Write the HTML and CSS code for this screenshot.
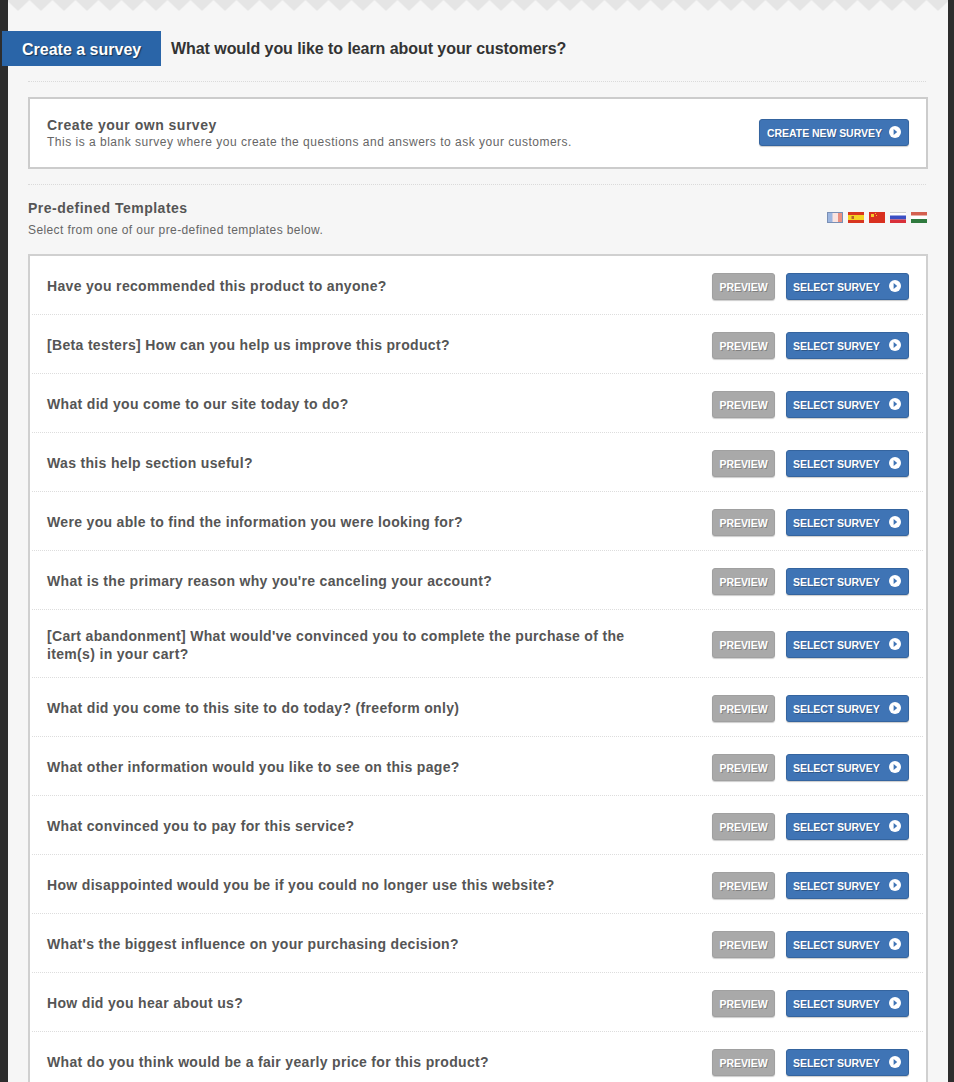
FILE: index.html
```html
<!DOCTYPE html>
<html lang="en">
<head>
    <meta charset="UTF-8">
    <meta name="viewport" content="width=device-width, initial-scale=1.0">
    <title>Create a survey</title>
    <link rel="stylesheet" href="styles.css">
</head>
<body>
    <svg width="0" height="0" class="defs">
        <symbol id="arrow" viewBox="0 0 12 12">
            <circle cx="6" cy="6" r="6" fill="#fff"/>
            <path d="M4.6 3l3.6 3-3.6 3z" fill="#3f74b5"/>
        </symbol>
    </svg>

    <div class="panel">
        <svg class="zigzag" width="100%" height="11">
            <defs>
                <pattern id="teeth" width="23" height="11" patternUnits="userSpaceOnUse" patternTransform="translate(-1.5 0)">
                    <path d="M0 0h23L11.5 11z" fill="#e5e5e5"/>
                </pattern>
            </defs>
            <rect width="100%" height="11" fill="url(#teeth)"/>
        </svg>

        <div class="page-head">
            <h1 class="tab">Create a survey</h1>
            <h2 class="question">What would you like to learn about your customers?</h2>
        </div>

        <div class="content">
            <div class="divider"></div>

            <div class="own-box">
                <div>
                    <h3>Create your own survey</h3>
                    <p>This is a blank survey where you create the questions and answers to ask your customers.</p>
                </div>
                <a class="btn btn-blue btn-create" href="#">CREATE NEW SURVEY <svg class="arrow"><use href="#arrow"/></svg></a>
            </div>

            <div class="divider"></div>

            <div class="templates-head">
                <div class="templates-text">
                    <h3>Pre-defined Templates</h3>
                    <p>Select from one of our pre-defined templates below.</p>
                </div>
                <div class="flags">
                    <svg class="flag" viewBox="0 0 16 11"><rect width="16" height="11" fill="#fbe4e0"/><rect width="5.5" height="11" fill="#9db6e0"/><rect x="11" width="5" height="11" fill="#ea8f80"/><rect x=".5" y=".5" width="15" height="10" fill="none" stroke="#7a8fb5"/></svg>
                    <svg class="flag" viewBox="0 0 16 11"><rect width="16" height="11" fill="#d8361f"/><rect y="3" width="16" height="5" fill="#f5d323"/><rect x="3.5" y="4" width="2.5" height="3" fill="#b8612a"/></svg>
                    <svg class="flag" viewBox="0 0 16 11"><rect width="16" height="11" fill="#d9301f"/><rect x="2" y="2" width="3" height="3" fill="#f6c92a"/><rect x="6" y="1" width="1" height="1" fill="#f6c92a"/><rect x="7" y="3" width="1" height="1" fill="#f6c92a"/></svg>
                    <svg class="flag" viewBox="0 0 16 11"><rect width="16" height="11" fill="#fff"/><rect y="3.5" width="16" height="4" fill="#3b4fc4"/><rect y="7.5" width="16" height="3.5" fill="#d9303a"/><rect width="16" height=".5" fill="#999"/></svg>
                    <svg class="flag" viewBox="0 0 16 11"><rect width="16" height="11" fill="#fff"/><rect width="16" height="3.5" fill="#d4604f"/><rect y="7" width="16" height="4" fill="#2f7a3e"/></svg>
                </div>
            </div>

            <div class="template-list">
                <div class="row"><span class="row-title">Have you recommended this product to anyone?</span><div class="row-actions"><a class="btn btn-grey" href="#">PREVIEW</a><a class="btn btn-blue" href="#">SELECT SURVEY <svg class="arrow"><use href="#arrow"/></svg></a></div></div>
                <div class="row"><span class="row-title">[Beta testers] How can you help us improve this product?</span><div class="row-actions"><a class="btn btn-grey" href="#">PREVIEW</a><a class="btn btn-blue" href="#">SELECT SURVEY <svg class="arrow"><use href="#arrow"/></svg></a></div></div>
                <div class="row"><span class="row-title">What did you come to our site today to do?</span><div class="row-actions"><a class="btn btn-grey" href="#">PREVIEW</a><a class="btn btn-blue" href="#">SELECT SURVEY <svg class="arrow"><use href="#arrow"/></svg></a></div></div>
                <div class="row"><span class="row-title">Was this help section useful?</span><div class="row-actions"><a class="btn btn-grey" href="#">PREVIEW</a><a class="btn btn-blue" href="#">SELECT SURVEY <svg class="arrow"><use href="#arrow"/></svg></a></div></div>
                <div class="row"><span class="row-title">Were you able to find the information you were looking for?</span><div class="row-actions"><a class="btn btn-grey" href="#">PREVIEW</a><a class="btn btn-blue" href="#">SELECT SURVEY <svg class="arrow"><use href="#arrow"/></svg></a></div></div>
                <div class="row"><span class="row-title">What is the primary reason why you're canceling your account?</span><div class="row-actions"><a class="btn btn-grey" href="#">PREVIEW</a><a class="btn btn-blue" href="#">SELECT SURVEY <svg class="arrow"><use href="#arrow"/></svg></a></div></div>
                <div class="row row-tall"><span class="row-title">[Cart abandonment] What would've convinced you to complete the purchase of the item(s) in your cart?</span><div class="row-actions"><a class="btn btn-grey" href="#">PREVIEW</a><a class="btn btn-blue" href="#">SELECT SURVEY <svg class="arrow"><use href="#arrow"/></svg></a></div></div>
                <div class="row"><span class="row-title">What did you come to this site to do today? (freeform only)</span><div class="row-actions"><a class="btn btn-grey" href="#">PREVIEW</a><a class="btn btn-blue" href="#">SELECT SURVEY <svg class="arrow"><use href="#arrow"/></svg></a></div></div>
                <div class="row"><span class="row-title">What other information would you like to see on this page?</span><div class="row-actions"><a class="btn btn-grey" href="#">PREVIEW</a><a class="btn btn-blue" href="#">SELECT SURVEY <svg class="arrow"><use href="#arrow"/></svg></a></div></div>
                <div class="row"><span class="row-title">What convinced you to pay for this service?</span><div class="row-actions"><a class="btn btn-grey" href="#">PREVIEW</a><a class="btn btn-blue" href="#">SELECT SURVEY <svg class="arrow"><use href="#arrow"/></svg></a></div></div>
                <div class="row"><span class="row-title">How disappointed would you be if you could no longer use this website?</span><div class="row-actions"><a class="btn btn-grey" href="#">PREVIEW</a><a class="btn btn-blue" href="#">SELECT SURVEY <svg class="arrow"><use href="#arrow"/></svg></a></div></div>
                <div class="row"><span class="row-title">What's the biggest influence on your purchasing decision?</span><div class="row-actions"><a class="btn btn-grey" href="#">PREVIEW</a><a class="btn btn-blue" href="#">SELECT SURVEY <svg class="arrow"><use href="#arrow"/></svg></a></div></div>
                <div class="row"><span class="row-title">How did you hear about us?</span><div class="row-actions"><a class="btn btn-grey" href="#">PREVIEW</a><a class="btn btn-blue" href="#">SELECT SURVEY <svg class="arrow"><use href="#arrow"/></svg></a></div></div>
                <div class="row"><span class="row-title">What do you think would be a fair yearly price for this product?</span><div class="row-actions"><a class="btn btn-grey" href="#">PREVIEW</a><a class="btn btn-blue" href="#">SELECT SURVEY <svg class="arrow"><use href="#arrow"/></svg></a></div></div>
            </div>
        </div>
    </div>
</body>
</html>
```

FILE: styles.css
```css
* {
    margin: 0;
    padding: 0;
    box-sizing: border-box;
}

html, body {
    height: 1082px;
    overflow: hidden;
}

body {
    font-family: "Liberation Sans", Arial, sans-serif;
    background-color: #2d2d2d;
    color: #555;
}

.defs {
    position: absolute;
}

.panel {
    width: 940px;
    margin-left: 8px;
    height: 1082px;
    background-color: #f6f6f6;
}

.zigzag {
    display: block;
}

.page-head {
    display: flex;
    align-items: center;
    margin: 20px 0 0 -6px;
}

.tab {
    width: 159px;
    height: 35px;
    padding-left: 20px;
    background-color: #2a65a8;
    color: #fff;
    font-size: 16px;
    line-height: 37px;
    font-weight: bold;
    text-shadow: 1px 1px 1px rgba(0, 0, 0, 0.5);
}

.question {
    margin-left: 10px;
    font-size: 16px;
    font-weight: bold;
    letter-spacing: -0.06px;
    color: #333;
}

.content {
    margin: 15px 20px 0;
    width: 900px;
}

.divider {
    height: 1px;
    margin-right: 2px;
    border-top: 1px dotted #dadada;
}

h3 {
    font-size: 14px;
    line-height: 16px;
    font-weight: bold;
    letter-spacing: 0.5px;
    color: #555;
}

.own-box p,
.templates-head p {
    font-size: 12px;
    color: #666;
}

.own-box {
    display: flex;
    align-items: center;
    justify-content: space-between;
    height: 72px;
    margin: 15px 0;
    padding: 0 17px;
    background-color: #fff;
    border: 2px solid #ccc;
}

.own-box p {
    margin-top: 2px;
    line-height: 14px;
    letter-spacing: 0.5px;
}

.templates-head {
    display: flex;
    align-items: center;
    justify-content: space-between;
    height: 69px;
}

.templates-text {
    margin-bottom: 2px;
}

.templates-head p {
    margin-top: 7px;
    letter-spacing: 0.4px;
}

.flags {
    display: flex;
    gap: 5px;
    margin: 0 1px 4px 0;
}

.flag {
    display: block;
    width: 16px;
    height: 11px;
}

.template-list {
    background-color: #fff;
    border: 2px solid #d0d0d0;
}

.row {
    display: flex;
    align-items: center;
    justify-content: space-between;
    margin: 0 3px 0 2px;
    padding: 16px 14px 14px 15px;
    min-height: 59px;
    border-bottom: 1px dotted #ddd;
}

.row-tall {
    padding-top: 17px;
}

.row-title {
    width: 590px;
    font-size: 14px;
    line-height: 18px;
    font-weight: bold;
    letter-spacing: 0.33px;
    color: #555;
}

.row-actions {
    display: flex;
    gap: 11px;
    margin-top: 1px;
}

.row-tall .row-actions {
    margin-top: -1px;
}

.btn {
    display: flex;
    align-items: center;
    height: 27px;
    border-radius: 3px;
    color: #fff;
    font-size: 10.5px;
    font-weight: bold;
    letter-spacing: -0.05px;
    white-space: nowrap;
    text-decoration: none;
    text-shadow: 1px 1px 0 rgba(0, 0, 0, 0.25);
    box-shadow: 0 1px 1px rgba(0, 0, 0, 0.2);
}

.btn-grey {
    width: 63px;
    justify-content: center;
    background-color: #a9a9a9;
    border: 1px solid #a0a0a0;
}

.btn-blue {
    width: 123px;
    justify-content: space-between;
    padding: 0 7px 0 6px;
    background-color: #3f74b5;
    border: 1px solid #34649f;
}

.btn-create {
    width: 150px;
    margin-top: -1px;
    padding-left: 7px;
}

.arrow {
    width: 12px;
    height: 12px;
    margin-bottom: 2px;
}
```
